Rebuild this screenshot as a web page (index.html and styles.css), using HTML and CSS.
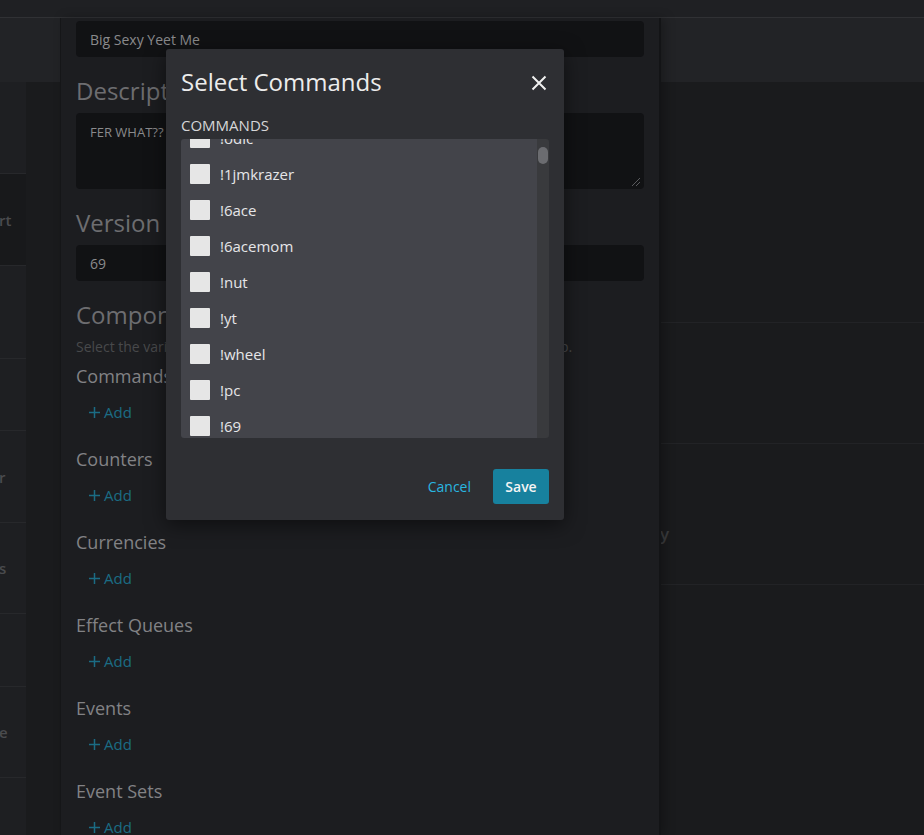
FILE: index.html
```html
<!DOCTYPE html>
<html lang="en">
<head>
<meta charset="utf-8">
<title>Select Commands</title>
<link rel="stylesheet" href="styles.css">
</head>
<body>
<div class="topbar"></div>
<div class="header"></div>
<div class="main">
  <nav class="nav">
    <div class="nav-item h91 first"></div>
    <div class="nav-item h92 selected"><span class="frag">rt</span></div>
    <div class="nav-item h93"></div>
    <div class="nav-item h72"></div>
    <div class="nav-item h92"><span class="frag">r</span></div>
    <div class="nav-item h91"><span class="frag">s</span></div>
    <div class="nav-item h73"></div>
    <div class="nav-item h91"><span class="frag">e</span></div>
    <div class="nav-item grow"></div>
  </nav>
  <div class="gutter"></div>
  <div class="content">
    <div class="row r1"></div>
    <div class="row r2"></div>
    <div class="row r3"><div class="row-label">Currently</div></div>
    <div class="row r4"></div>
  </div>
</div>

<aside class="drawer">
  <div class="field">Big Sexy Yeet Me</div>
  <h3 class="h-lg">Description</h3>
  <div class="field textarea">FER WHAT??
    <svg class="grip" width="10" height="10" viewBox="0 0 10 10"><path d="M1 9 L9 1 M5 9 L9 5" stroke="#5a5b5e" stroke-width="1" fill="none"/></svg>
  </div>
  <h3 class="h-lg">Version</h3>
  <div class="field">69</div>
  <h3 class="h-lg">Components</h3>
  <p class="sub">Select the various components that you would like to include into this setup.</p>

  <div class="section">
    <h4 class="h-sm">Commands</h4>
    <div class="add"><svg width="11" height="11" viewBox="0 0 11 11"><path d="M5.5 0 V11 M0 5.5 H11" stroke="#1b6c84" stroke-width="1.5"/></svg><span>Add</span></div>
  </div>
  <div class="section">
    <h4 class="h-sm">Counters</h4>
    <div class="add"><svg width="11" height="11" viewBox="0 0 11 11"><path d="M5.5 0 V11 M0 5.5 H11" stroke="#1b6c84" stroke-width="1.5"/></svg><span>Add</span></div>
  </div>
  <div class="section">
    <h4 class="h-sm">Currencies</h4>
    <div class="add"><svg width="11" height="11" viewBox="0 0 11 11"><path d="M5.5 0 V11 M0 5.5 H11" stroke="#1b6c84" stroke-width="1.5"/></svg><span>Add</span></div>
  </div>
  <div class="section">
    <h4 class="h-sm">Effect Queues</h4>
    <div class="add"><svg width="11" height="11" viewBox="0 0 11 11"><path d="M5.5 0 V11 M0 5.5 H11" stroke="#1b6c84" stroke-width="1.5"/></svg><span>Add</span></div>
  </div>
  <div class="section">
    <h4 class="h-sm">Events</h4>
    <div class="add"><svg width="11" height="11" viewBox="0 0 11 11"><path d="M5.5 0 V11 M0 5.5 H11" stroke="#1b6c84" stroke-width="1.5"/></svg><span>Add</span></div>
  </div>
  <div class="section">
    <h4 class="h-sm">Event Sets</h4>
    <div class="add"><svg width="11" height="11" viewBox="0 0 11 11"><path d="M5.5 0 V11 M0 5.5 H11" stroke="#1b6c84" stroke-width="1.5"/></svg><span>Add</span></div>
  </div>
</aside>

<div class="modal">
  <div class="modal-header">
    <h2 class="modal-title">Select Commands</h2>
    <svg class="close" width="16" height="16" viewBox="0 0 16 16"><path d="M1.5 1.5 L14.5 14.5 M14.5 1.5 L1.5 14.5" stroke="#f0f0f0" stroke-width="2" fill="none"/></svg>
  </div>
  <div class="label">COMMANDS</div>
  <div class="list">
    <div class="list-items">
      <div class="list-inner">
        <div class="item"><span class="cb"></span><span class="name">!odic</span></div>
        <div class="item"><span class="cb"></span><span class="name">!1jmkrazer</span></div>
        <div class="item"><span class="cb"></span><span class="name">!6ace</span></div>
        <div class="item"><span class="cb"></span><span class="name">!6acemom</span></div>
        <div class="item"><span class="cb"></span><span class="name">!nut</span></div>
        <div class="item"><span class="cb"></span><span class="name">!yt</span></div>
        <div class="item"><span class="cb"></span><span class="name">!wheel</span></div>
        <div class="item"><span class="cb"></span><span class="name">!pc</span></div>
        <div class="item"><span class="cb"></span><span class="name">!69</span></div>
        <div class="item"><span class="cb"></span><span class="name">!lurk</span></div>
      </div>
    </div>
    <div class="track"><div class="thumb"></div></div>
  </div>
  <div class="modal-footer">
    <span class="cancel">Cancel</span>
    <span class="save">Save</span>
  </div>
</div>
</body>
</html>
```

FILE: styles.css
```css
* { box-sizing: border-box; }
html, body { margin: 0; padding: 0; }
body {
  width: 924px;
  height: 835px;
  overflow: hidden;
  position: relative;
  background: #1a1b1d;
  font-family: "Open Sans", "Liberation Sans", sans-serif;
}

.topbar { height: 18px; background: #1f2023; border-bottom: 1px solid #303134; }
.header { height: 64px; background: #222326; }

.main { display: flex; height: 753px; }
.nav { width: 26px; background: #1e1f22; display: flex; flex-direction: column; }
.nav-item {
  border-top: 1px solid #27282b;
  display: flex;
  align-items: center;
  overflow: hidden;
  color: #4a4b4e;
  font-size: 15px;
  font-weight: 600;
}
.nav-item.first { border-top: none; }
.nav-item.selected { background: #18191b; }
.h91 { height: 91px; }
.h92 { height: 92px; }
.h93 { height: 93px; }
.h72 { height: 72px; }
.h73 { height: 73px; }
.grow { flex: 1; }
.frag { margin-left: -1px; }

.gutter { width: 34px; background: #1a1b1d; }
.content { flex: 1; display: flex; flex-direction: column; background: #1a1b1d; }
.row { border-top: 1px solid #222326; }
.r1 { height: 240px; border-top: none; }
.r2 { height: 121px; }
.r3 { height: 141px; }
.r4 { flex: 1; }
.row-label {
  width: 609px;
  text-align: right;
  padding-top: 79px;
  font-size: 17px;
  line-height: 22px;
  font-weight: 600;
  color: #3a3b3e;
}

/* drawer */
.drawer {
  position: absolute;
  left: 60px;
  top: 18px;
  width: 601px;
  bottom: 0;
  background: #1c1d20;
  border-left: 1px solid #151618;
  border-right: 2px solid #131416;
  box-shadow: 4px 0 10px rgba(0, 0, 0, 0.25);
  padding: 3px 15px 0 15px;
  overflow: hidden;
}
.field {
  position: relative;
  height: 36px;
  background: #111214;
  border-radius: 4px;
  padding: 0 14px;
  display: flex;
  align-items: center;
  color: #8a8a8c;
  font-size: 14px;
}
.textarea { height: 76px; align-items: flex-start; padding-top: 9px; font-size: 13px; line-height: 20px; }
.grip { position: absolute; right: 3px; bottom: 2px; }
.h-lg {
  margin: 19px 0 7px;
  font-size: 24px;
  line-height: 30px;
  font-weight: 400;
  color: #6d6d70;
}
.sub {
  margin: 8px 0 0;
  font-size: 14px;
  line-height: 18px;
  color: #48494b;
  white-space: nowrap;
}
.section { margin-top: 8px; margin-bottom: 25px; }
.h-sm {
  margin: 0;
  font-size: 18px;
  line-height: 24px;
  font-weight: 400;
  color: #828285;
}
.add {
  margin-top: 14px;
  padding-left: 13px;
  height: 20px;
  display: flex;
  align-items: center;
  gap: 4px;
  color: #1b6c84;
  font-size: 15px;
}

/* modal */
.modal {
  position: absolute;
  left: 166px;
  top: 49px;
  width: 398px;
  background: #2e2f33;
  border-radius: 3px;
  box-shadow: 0 5px 20px rgba(0, 0, 0, 0.5);
  padding: 16px 15px 16px 15px;
  display: flex;
  flex-direction: column;
}
.modal-header { display: flex; align-items: center; justify-content: space-between; height: 34px; }
.modal-title {
  margin: 0;
  font-size: 24px;
  line-height: 34px;
  font-weight: 400;
  color: #ececec;
}
.close { margin-right: 2px; margin-top: 2px; }
.label {
  margin-top: 16px;
  font-size: 15px;
  line-height: 20px;
  color: #d6d6d8;
}
.list {
  margin-top: 4px;
  height: 299px;
  display: flex;
  border-radius: 3px;
  overflow: hidden;
}
.list-items { flex: 1; background: #43444a; overflow: hidden; }
.list-inner { margin-top: -19px; }
.item { height: 36px; display: flex; align-items: center; padding-left: 9px; }
.cb { width: 20px; height: 20px; background: #e6e6e6; border-radius: 1px; }
.name { margin-left: 10px; font-size: 15px; line-height: 20px; color: #e6e6e8; }
.track { width: 12px; background: #393a3d; padding: 8px 1px 0 1px; }
.thumb { height: 17px; background: #6b6c70; border-radius: 5px; }

.modal-footer {
  margin-top: 31px;
  display: flex;
  justify-content: flex-end;
  align-items: center;
}
.cancel { font-size: 14px; color: #29b6e0; margin-right: 22px; }
.save {
  width: 56px;
  height: 35px;
  display: flex;
  align-items: center;
  justify-content: center;
  background: #17819e;
  border-radius: 3px;
  color: #f4f4f4;
  font-size: 14px;
  font-weight: 600;
}
```
